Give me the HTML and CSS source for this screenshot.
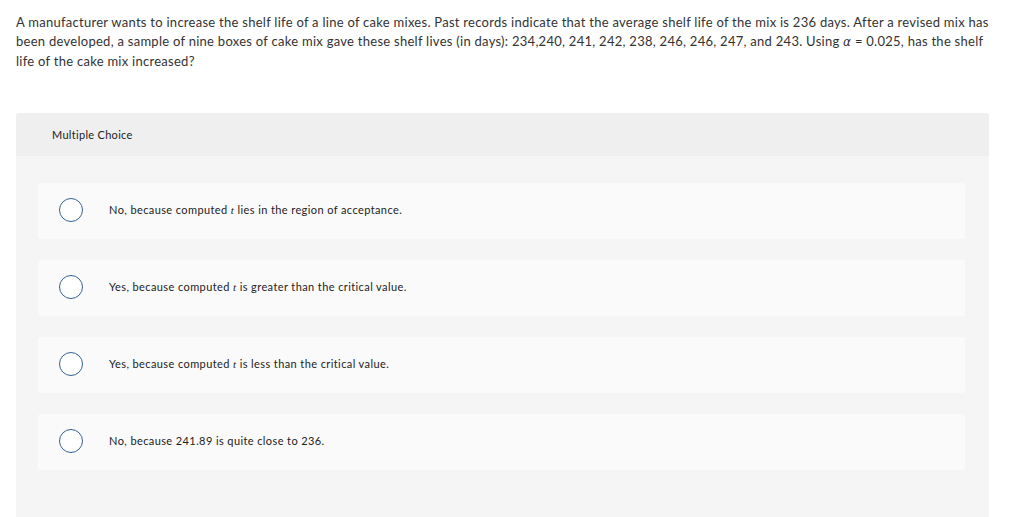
FILE: index.html
```html
<!DOCTYPE html>
<html>
<head>
<meta charset="utf-8">
<link rel="stylesheet" href="styles.css">
</head>
<body>
<div class="page">
  <p class="question">A manufacturer wants to increase the shelf life of a line of cake mixes. Past records indicate that the average shelf life of the mix is 236 days. After a revised mix has been developed, a sample of nine boxes of cake mix gave these shelf lives (in days): 234,240, 241, 242, 238, 246, 246, 247, and 243. Using <i class="alpha">α</i> = 0.025, has the shelf life of the cake mix increased?</p>
  <div class="mc">
    <div class="mc-head">Multiple Choice</div>
    <div class="mc-body">
      <div class="option"><span class="radio"></span><span class="label">No, because computed <i>t</i> lies in the region of acceptance.</span></div>
      <div class="option"><span class="radio"></span><span class="label">Yes, because computed <i>t</i> is greater than the critical value.</span></div>
      <div class="option"><span class="radio"></span><span class="label">Yes, because computed <i>t</i> is less than the critical value.</span></div>
      <div class="option"><span class="radio"></span><span class="label">No, because 241.89 is quite close to 236.</span></div>
    </div>
  </div>
</div>
</body>
</html>
```
FILE: styles.css
```css
html, body {
  margin: 0;
  padding: 0;
  background: #ffffff;
}
body {
  font-family: Lato, "Liberation Sans", sans-serif;
  color: #333333;
  overflow: hidden;
}
.page {
  padding: 13px 35px 0 16px;
}
.question {
  margin: 0 -12px 0 0;
  font-size: 13px;
  line-height: 19px;
  letter-spacing: 0.27px;
}
.alpha {
  font-family: "DejaVu Sans", sans-serif;
  font-size: 12px;
  color: #333;
}
.mc {
  margin-top: 42px;
  border-radius: 3px;
  overflow: hidden;
  background: #f5f5f5;
  height: 420px;
}
.mc-head {
  background: #efefef;
  height: 43px;
  display: flex;
  align-items: center;
  padding-left: 36px;
  font-size: 11px;
  letter-spacing: 0.3px;
  color: #222;
}
.mc-body {
  padding: 27px 24px 0 22px;
  display: flex;
  flex-direction: column;
  gap: 21px;
}
.option {
  background: #fafafa;
  border-radius: 3px;
  height: 56px;
  display: flex;
  align-items: center;
  padding-left: 21px;
}
.radio {
  width: 22px;
  height: 22px;
  border: 1px solid #36618f;
  border-radius: 50%;
  background: #ffffff;
  flex: none;
  margin-top: -3px;
}
.label {
  margin-left: 26px;
  font-size: 11px;
  letter-spacing: 0.4px;
  color: #222;
  margin-top: -3px;
}
.label i {
  font-family: "Liberation Serif", serif;
}
```
